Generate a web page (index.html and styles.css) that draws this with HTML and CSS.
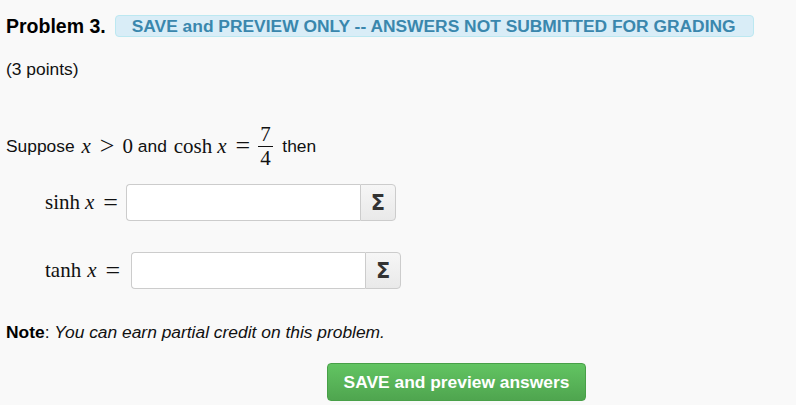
FILE: index.html
```html
<!DOCTYPE html>
<html>
<head>
<meta charset="utf-8">
<link rel="stylesheet" href="styles.css">
</head>
<body>
<div class="page">
  <div class="header">
    <span class="title">Problem 3.</span>
    <span class="badge">SAVE and PREVIEW ONLY -- ANSWERS NOT SUBMITTED FOR GRADING</span>
  </div>
  <p class="points">(3 points)</p>
  <p class="statement">Suppose <span class="m"><i>x</i><span class="rel">&gt;</span>0</span> and <span class="m">cosh<i class="arg">x</i><span class="rel">=</span><span class="frac"><span class="num">7</span><span class="den">4</span></span></span>  then</p>
  <div class="answer a1">
    <span class="m lbl">sinh<i class="arg">x</i><span class="rel">=</span></span>
    <span class="group"><span class="field"></span><span class="sig">Σ</span></span>
  </div>
  <div class="answer a2">
    <span class="m lbl">tanh<i class="arg">x</i><span class="rel">=</span></span>
    <span class="group"><span class="field"></span><span class="sig">Σ</span></span>
  </div>
  <p class="note"><b>Note</b>: <i>You can earn partial credit on this problem.</i></p>
  <div class="actions"><span class="btn">SAVE and preview answers</span></div>
</div>
</body>
</html>
```
FILE: styles.css
```css
html, body {
  margin: 0;
  padding: 0;
  background: #f9f9f9;
}
body {
  font-family: "Liberation Sans", Arial, sans-serif;
  font-size: 17.4px;
  color: #111;
}
.page {
  padding: 0 6px;
  display: flex;
  flex-direction: column;
}
.header {
  display: flex;
  align-items: center;
  margin-top: 14px;
  height: 24px;
}
.title {
  font-weight: bold;
  font-size: 19.5px;
  color: #000;
}
.badge {
  margin-left: 9px;
  width: 605px;
  height: 20px;
  line-height: 20px;
  padding: 0 16px;
  background: #d9edf7;
  border: 1px solid #bce8f1;
  border-radius: 4px;
  color: #3a87ad;
  font-weight: bold;
  font-size: 17.4px;
  white-space: nowrap;
}
.points {
  margin: 21px 0 0;
  line-height: 20px;
}
.statement {
  margin: 42px 0 0;
  display: flex;
  align-items: center;
  white-space: pre;
  height: 50px;
}
.m {
  font-family: "Liberation Serif", "Times New Roman", serif;
  font-size: 21px;
  display: inline-flex;
  align-items: center;
  white-space: pre;
  margin-left: 2px;
}
.m i {
  font-style: italic;
}
.arg {
  margin-left: 5px;
}
.rel {
  font-size: 26px;
  margin: 0 8px 0 9px;
  line-height: 20px;
}
.frac {
  display: inline-flex;
  flex-direction: column;
  align-items: center;
  font-size: 21px;
}
.num {
  border-bottom: 1px solid #111;
  padding: 0 2px 1px;
  line-height: 21px;
}
.den {
  padding: 1px 2px 0;
  line-height: 21px;
}
.answer {
  display: flex;
  align-items: center;
  margin-left: 37px;
}
.a1 {
  margin-top: 13px;
}
.a2 {
  margin-top: 31px;
}
.a1 .lbl .rel {
  margin-right: 8px;
}
.a2 .lbl .arg {
  margin-left: 6px;
}
.a2 .lbl .rel {
  margin-right: 11px;
}
.group {
  display: flex;
  height: 37px;
}
.field {
  width: 233px;
  background: #fff;
  border: 1px solid #ccc;
  border-right: none;
  border-radius: 4px 0 0 4px;
}
.sig {
  width: 34px;
  display: flex;
  align-items: center;
  justify-content: center;
  background: linear-gradient(#f6f6f6, #e9e9e9);
  border: 1px solid #ccc;
  border-radius: 0 4px 4px 0;
  font-family: "DejaVu Sans", sans-serif;
  font-weight: bold;
  font-size: 21px;
  color: #333;
}
.note {
  margin: 33px 0 0;
  line-height: 20px;
}
.note b {
  color: #000;
}
.actions {
  margin-top: 21px;
  margin-left: 321px;
}
.btn {
  display: inline-block;
  width: 257px;
  height: 36px;
  line-height: 36px;
  text-align: center;
  color: #fff;
  font-weight: bold;
  font-size: 17.4px;
  background: linear-gradient(#62c462, #4fa54f);
  border: 1px solid #48a048;
  border-radius: 4px;
}
```
